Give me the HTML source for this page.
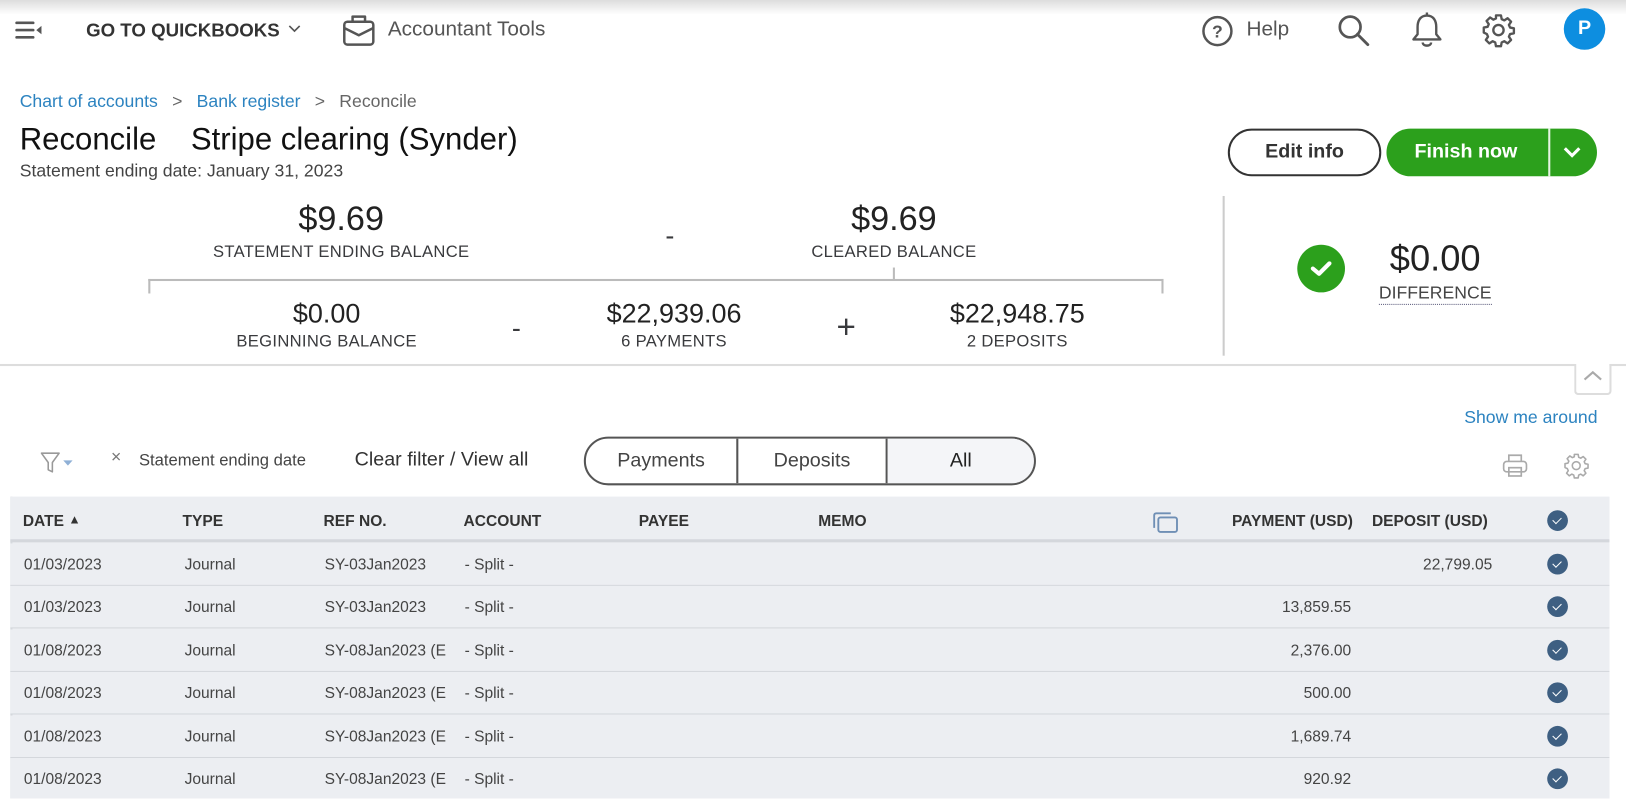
<!DOCTYPE html>
<html><head><meta charset="utf-8"><style>
*{box-sizing:border-box;margin:0;padding:0}
body{width:1626px;height:798px;overflow:hidden;background:#fff;font-family:"Liberation Sans",sans-serif;color:#393a3d;position:relative}
#w{position:absolute;left:0;top:0;width:1568px;height:770px;transform:scale(1.037);transform-origin:0 0;overflow:hidden}
.a{position:absolute;white-space:nowrap}
.c{text-align:center;transform:translateX(-50%)}
.big{font-size:33px;color:#222}
.lab{font-size:16px;color:#393a3d;letter-spacing:.3px}
.amt{font-size:26px;color:#222}
.row{position:absolute;left:10px;width:1542px;height:41px;border-bottom:1px solid #d4d7dc;background:#eceef2;font-size:15px;color:#444}
.row span{position:absolute;top:12px}
.hd span{font-weight:bold;font-size:15px;color:#333;top:15px}
.chk{position:absolute;left:1482px;top:10px;width:20px;height:20px;border-radius:50%;background:#3e5f82}
.chk:after{content:"";position:absolute;left:7px;top:5px;width:4px;height:7px;border:solid #fff;border-width:0 1.5px 1.5px 0;transform:rotate(45deg)}
</style></head><body><div id="w">
<div class="a" style="left:0;top:0;width:1626px;height:14px;background:linear-gradient(#ddd,#fff)"></div>
<svg class="a" style="left:14px;top:19px" width="30" height="20" viewBox="0 0 30 20"><g stroke="#555" stroke-width="2.5" stroke-linecap="round"><line x1="2" y1="3" x2="18" y2="3"/><line x1="2" y1="10" x2="18" y2="10"/><line x1="2" y1="17" x2="18" y2="17"/></g><path d="M26 6 L21 10 L26 14Z" fill="#555"/></svg>
<div class="a" style="left:83px;top:19px;font-size:18px;font-weight:bold;color:#333">GO TO QUICKBOOKS</div>
<svg class="a" style="left:277px;top:23px" width="14" height="10"><path d="M2 2 L7 7 L12 2" stroke="#555" stroke-width="1.6" fill="none"/></svg>
<svg class="a" style="left:329px;top:12px" width="34" height="34" viewBox="0 0 34 34"><g stroke="#555" stroke-width="2.4" fill="none" stroke-linejoin="round"><rect x="3" y="9" width="28" height="22" rx="3"/><path d="M11 9 V4 H23 V9"/><path d="M3 15 L17 22 L31 15"/></g></svg>
<div class="a" style="left:374px;top:17px;font-size:20px;color:#555">Accountant Tools</div>
<svg class="a" style="left:1158px;top:14px" width="32" height="32" viewBox="0 0 32 32"><circle cx="16" cy="16" r="13.5" stroke="#555" stroke-width="2.4" fill="none"/><text x="16" y="22" font-size="17" font-weight="bold" text-anchor="middle" fill="#555" font-family="Liberation Sans">?</text></svg>
<div class="a" style="left:1202px;top:17px;font-size:20px;color:#555">Help</div>
<svg class="a" style="left:1288px;top:12px" width="34" height="34" viewBox="0 0 34 34"><circle cx="14" cy="14" r="10" stroke="#555" stroke-width="2.6" fill="none"/><line x1="21" y1="21" x2="31" y2="31" stroke="#555" stroke-width="2.8" stroke-linecap="round"/></svg>
<svg class="a" style="left:1360px;top:11px" width="32" height="36" viewBox="0 0 32 36"><path d="M16 4 C9 4 7 10 7 15 V22 L3 27 H29 L25 22 V15 C25 10 23 4 16 4Z M12 30 C12 34 20 34 20 30" stroke="#555" stroke-width="2.3" fill="none" stroke-linejoin="round"/><line x1="16" y1="1" x2="16" y2="4" stroke="#555" stroke-width="2.3"/></svg>
<svg class="a" style="left:1428px;top:12px" width="34" height="34" viewBox="0 0 24 24"><path d="M10.3 2h3.4l.5 2.6 1.8.8 2.2-1.5 2.4 2.4-1.5 2.2.8 1.8 2.6.5v3.4l-2.6.5-.8 1.8 1.5 2.2-2.4 2.4-2.2-1.5-1.8.8-.5 2.6h-3.4l-.5-2.6-1.8-.8-2.200 1.5-2.4-2.4 1.5-2.2-.8-1.8L2 13.7v-3.4l2.6-.5.8-1.8-1.5-2.2 2.4-2.4 2.2 1.5 1.8-.8z" fill="none" stroke="#555" stroke-width="1.6" stroke-linejoin="round"/><circle cx="12" cy="12" r="3.5" fill="none" stroke="#555" stroke-width="1.6"/></svg>
<div class="a" style="left:1508px;top:8px;width:40px;height:40px;border-radius:50%;background:#0d8ee0;color:#fff;font-weight:bold;font-size:19px;text-align:center;line-height:40px">P</div>
<div class="a" style="left:19px;top:88px;font-size:17px;color:#2c83c0">Chart of accounts <span style="color:#666;padding:0 9px">&gt;</span> Bank register <span style="color:#666;padding:0 9px">&gt;</span> <span style="color:#666">Reconcile</span></div>
<div class="a" style="left:19px;top:118px;font-size:30px;color:#111">Reconcile&nbsp;&nbsp;&nbsp; Stripe clearing (Synder)</div>
<div class="a" style="left:19px;top:155px;font-size:17px;color:#444">Statement ending date: January 31, 2023</div>
<div class="a" style="left:1184px;top:124px;width:148px;height:46px;border:2px solid #333;border-radius:23px;text-align:center;line-height:42px;font-size:19px;font-weight:bold;color:#333">Edit info</div>
<div class="a" style="left:1337px;top:124px;width:203px;height:46px;border-radius:23px;background:#2ca01c;color:#fff;font-size:19px;font-weight:bold;line-height:46px;padding-left:27px">Finish now</div>
<div class="a" style="left:1493px;top:124px;width:2px;height:46px;background:#e6f4e3"></div>
<svg class="a" style="left:1506px;top:139px" width="20" height="16"><path d="M3 4 L10 11 L17 4" stroke="#fff" stroke-width="3" fill="none"/></svg>
<div class="a c big" style="left:329px;top:192px">$9.69</div>
<div class="a c lab" style="left:329px;top:235px">STATEMENT ENDING BALANCE</div>
<div class="a c" style="left:646px;top:212px;font-size:26px">-</div>
<div class="a c big" style="left:862px;top:192px">$9.69</div>
<div class="a c lab" style="left:862px;top:235px">CLEARED BALANCE</div>
<div class="a" style="left:143px;top:269px;width:979px;height:2px;background:#bbb"></div>
<div class="a" style="left:143px;top:269px;width:2px;height:14px;background:#bbb"></div>
<div class="a" style="left:1120px;top:269px;width:2px;height:14px;background:#bbb"></div>
<div class="a" style="left:861px;top:258px;width:2px;height:12px;background:#bbb"></div>
<div class="a c amt" style="left:315px;top:287px">$0.00</div>
<div class="a c lab" style="left:315px;top:321px">BEGINNING BALANCE</div>
<div class="a c" style="left:498px;top:301px;font-size:26px">-</div>
<div class="a c amt" style="left:650px;top:287px">$22,939.06</div>
<div class="a c lab" style="left:650px;top:321px">6 PAYMENTS</div>
<div class="a c" style="left:816px;top:297px;font-size:32px">+</div>
<div class="a c amt" style="left:981px;top:287px">$22,948.75</div>
<div class="a c lab" style="left:981px;top:321px">2 DEPOSITS</div>
<div class="a" style="left:1179px;top:189px;width:2px;height:154px;background:#ccc"></div>
<div class="a" style="left:1251px;top:236px;width:46px;height:46px;border-radius:50%;background:#2ca01c"></div>
<svg class="a" style="left:1262px;top:248px" width="24" height="22"><path d="M4 11 L10 16 L20 6" stroke="#fff" stroke-width="4" fill="none" stroke-linecap="round" stroke-linejoin="round"/></svg>
<div class="a c" style="left:1384px;top:230px;font-size:35px;color:#222">$0.00</div>
<div class="a c" style="left:1384px;top:273px;font-size:17px;color:#444;border-bottom:1px dotted #557">DIFFERENCE</div>
<div class="a" style="left:0;top:351px;width:1519px;height:2px;background:#ddd"></div>
<div class="a" style="left:1518px;top:351px;width:36px;height:30px;border:2px solid #ddd;border-top:none;border-radius:0 0 4px 4px"></div>
<div class="a" style="left:1552px;top:351px;width:74px;height:2px;background:#ddd"></div>
<svg class="a" style="left:1525px;top:355px" width="22" height="14"><path d="M3 11 L11 4 L19 11" stroke="#aaa" stroke-width="2" fill="none"/></svg>
<div class="a" style="left:1412px;top:393px;font-size:17px;color:#2c83c0">Show me around</div>
<svg class="a" style="left:38px;top:435px" width="40" height="22"><path d="M2 2 H19 L12.5 11 V20 L8.5 18 V11Z" stroke="#999" stroke-width="1.5" fill="none" stroke-linejoin="round"/><path d="M23 9 H32 L27.5 14Z" fill="#8fb0d6"/></svg>
<div class="a" style="left:107px;top:431px;font-size:17px;color:#777">×</div>
<div class="a" style="left:134px;top:436px;font-size:16px;color:#444">Statement ending date</div>
<div class="a" style="left:342px;top:433px;font-size:19px;color:#333">Clear filter / View all</div>
<div class="a" style="left:563px;top:421px;width:436px;height:47px;border:2px solid #555;border-radius:24px;overflow:hidden;font-size:19px;color:#444">
 <div class="a" style="left:0;top:0;width:145px;height:43px;line-height:43px;text-align:center">Payments</div>
 <div class="a" style="left:145px;top:0;width:146px;height:43px;line-height:43px;text-align:center;border-left:2px solid #555;border-right:2px solid #555">Deposits</div>
 <div class="a" style="left:291px;top:0;width:141px;height:43px;line-height:43px;text-align:center;background:#f4f5f8;color:#222">All</div>
</div>
<svg class="a" style="left:1448px;top:436px" width="26" height="26" viewBox="0 0 26 26"><g stroke="#aaa" stroke-width="1.6" fill="none"><path d="M7 9 V3 H19 V9"/><rect x="2" y="9" width="22" height="10" rx="3"/><rect x="7" y="15" width="12" height="8"/></g></svg>
<svg class="a" style="left:1507px;top:436px" width="26" height="26" viewBox="0 0 24 24"><path d="M10.3 2h3.4l.5 2.6 1.8.8 2.2-1.5 2.4 2.4-1.5 2.2.8 1.8 2.6.5v3.4l-2.6.5-.8 1.8 1.5 2.2-2.4 2.4-2.2-1.5-1.8.8-.5 2.6h-3.4l-.5-2.6-1.8-.8-2.2 1.5-2.4-2.4 1.5-2.2-.8-1.8L2 13.7v-3.4l2.6-.5.8-1.8-1.5-2.2 2.4-2.4 2.2 1.5 1.8-.8z" fill="none" stroke="#aaa" stroke-width="1.4" stroke-linejoin="round"/><circle cx="12" cy="12" r="3.5" fill="none" stroke="#aaa" stroke-width="1.4"/></svg>
<div class="a" style="left:10px;top:479px;width:1542px;height:319px;background:#eceef2;border-left:2px solid #d4d7dc"></div>
<div class="row hd" style="top:479px;height:44px;border-bottom:3px solid #d4d7dc">
 <span style="left:12px">DATE <span style="position:static;font-size:12px;vertical-align:2px">▲</span></span><span style="left:166px">TYPE</span><span style="left:302px">REF NO.</span><span style="left:437px">ACCOUNT</span><span style="left:606px">PAYEE</span><span style="left:779px">MEMO</span>
 <svg style="position:absolute;left:1100px;top:14px" width="28" height="22"><g stroke="#6f8fb5" stroke-width="1.8" fill="none"><rect x="7" y="6" width="18" height="14" rx="2"/><path d="M3 16 V4 Q3 2 5 2 H19"/></g></svg>
 <span style="left:1178px">PAYMENT (USD)</span><span style="left:1313px">DEPOSIT (USD)</span>
 <div class="chk" style="top:13px"></div>
</div>
<div class="row" style="top:524px"><span style="left:13px">01/03/2023</span><span style="left:168px">Journal</span><span style="left:303px">SY-03Jan2023</span><span style="left:438px">- Split -</span><span style="right:113px">22,799.05</span><div class="chk"></div></div>
<div class="row" style="top:565px"><span style="left:13px">01/03/2023</span><span style="left:168px">Journal</span><span style="left:303px">SY-03Jan2023</span><span style="left:438px">- Split -</span><span style="right:249px">13,859.55</span><div class="chk"></div></div>
<div class="row" style="top:607px"><span style="left:13px">01/08/2023</span><span style="left:168px">Journal</span><span style="left:303px">SY-08Jan2023 (E</span><span style="left:434px;background:#eceef2;padding-left:4px">- Split -</span><span style="right:249px">2,376.00</span><div class="chk"></div></div>
<div class="row" style="top:648px"><span style="left:13px">01/08/2023</span><span style="left:168px">Journal</span><span style="left:303px">SY-08Jan2023 (E</span><span style="left:434px;background:#eceef2;padding-left:4px">- Split -</span><span style="right:249px">500.00</span><div class="chk"></div></div>
<div class="row" style="top:690px"><span style="left:13px">01/08/2023</span><span style="left:168px">Journal</span><span style="left:303px">SY-08Jan2023 (E</span><span style="left:434px;background:#eceef2;padding-left:4px">- Split -</span><span style="right:249px">1,689.74</span><div class="chk"></div></div>
<div class="row" style="top:731px"><span style="left:13px">01/08/2023</span><span style="left:168px">Journal</span><span style="left:303px">SY-08Jan2023 (E</span><span style="left:434px;background:#eceef2;padding-left:4px">- Split -</span><span style="right:249px">920.92</span><div class="chk"></div></div>
</div></body></html>
